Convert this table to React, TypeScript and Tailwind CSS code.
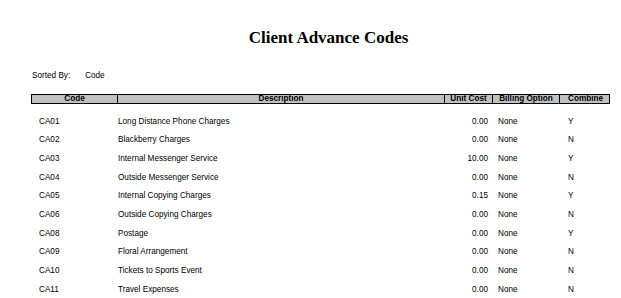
import React from "react";

const rows = [
  { code: "CA01", desc: "Long Distance Phone Charges", cost: "0.00", billing: "None", combine: "Y" },
  { code: "CA02", desc: "Blackberry Charges", cost: "0.00", billing: "None", combine: "N" },
  { code: "CA03", desc: "Internal Messenger Service", cost: "10.00", billing: "None", combine: "Y" },
  { code: "CA04", desc: "Outside Messenger Service", cost: "0.00", billing: "None", combine: "N" },
  { code: "CA05", desc: "Internal Copying Charges", cost: "0.15", billing: "None", combine: "Y" },
  { code: "CA06", desc: "Outside Copying Charges", cost: "0.00", billing: "None", combine: "N" },
  { code: "CA08", desc: "Postage", cost: "0.00", billing: "None", combine: "Y" },
  { code: "CA09", desc: "Floral Arrangement", cost: "0.00", billing: "None", combine: "N" },
  { code: "CA10", desc: "Tickets to Sports Event", cost: "0.00", billing: "None", combine: "N" },
  { code: "CA11", desc: "Travel Expenses", cost: "0.00", billing: "None", combine: "N" },
];

const cols = "grid grid-cols-[85px_327px_48px_67px_52px]";

const App = () => {
  return (
    <div className="w-[621px] h-[298px] overflow-hidden bg-white text-black font-['Liberation_Sans',Arial,sans-serif]">
      <div className="pt-[28px] pl-[36px] text-center">
        <h1 className="text-[17px] leading-[20px] font-bold font-['Liberation_Serif','Times_New_Roman',serif]">
          Client Advance Codes
        </h1>
      </div>

      <div className="mt-[23px] ml-[32px] flex text-[8.2px] leading-[10px]">
        <span className="w-[53px]">Sorted By:</span>
        <span>Code</span>
      </div>

      <div className="ml-[31px] mt-[13px] w-[579px]">
        <div className={`${cols} h-[10px] border border-black bg-[#c0c0c0] text-[8.2px] leading-[8px] font-bold`}>
          <div className="flex items-center justify-center">Code</div>
          <div className="flex items-center justify-center border-l border-black">Description</div>
          <div className="flex items-center justify-center border-l border-black">Unit Cost</div>
          <div className="flex items-center justify-center border-l border-black">Billing Option</div>
          <div className="flex items-center justify-center border-l border-black">Combine</div>
        </div>

        <div className="mt-[8.6px]">
          {rows.map((r) => (
            <div key={r.code} className={`${cols} h-[18.67px] text-[8.2px] leading-[18.67px]`}>
              <div className="pl-[8px]">{r.code}</div>
              <div className="pl-[2px]">{r.desc}</div>
              <div className="pr-[3px] text-right">{r.cost}</div>
              <div className="pl-[7px]">{r.billing}</div>
              <div className="pl-[10px]">{r.combine}</div>
            </div>
          ))}
        </div>
      </div>
    </div>
  );
};

export default App;
